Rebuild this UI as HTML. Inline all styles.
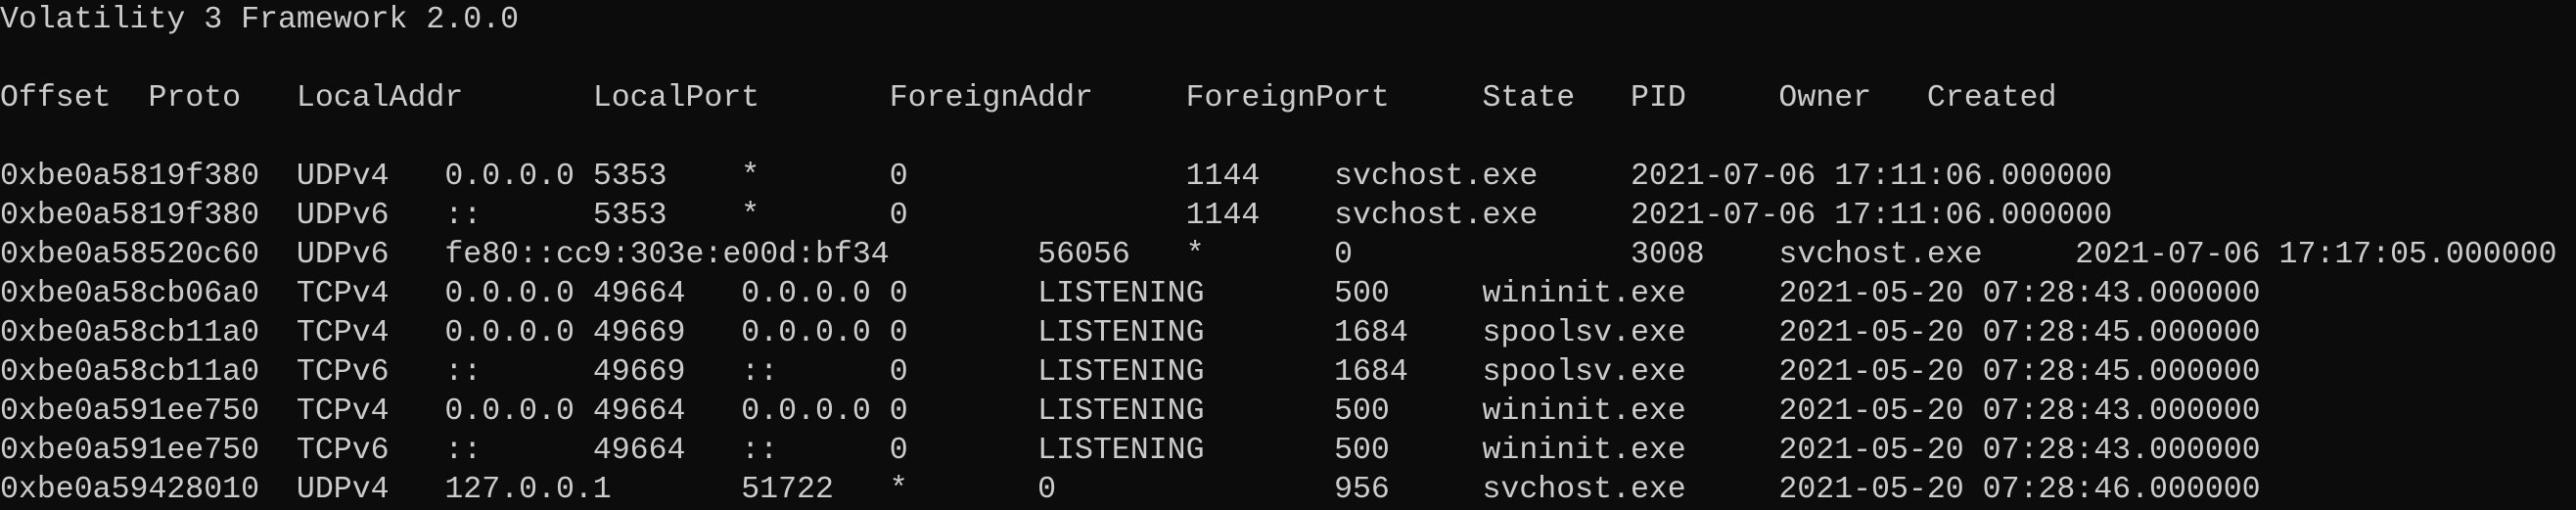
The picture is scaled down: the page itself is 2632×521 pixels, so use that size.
<!DOCTYPE html>
<html><head><meta charset="utf-8"><style>
html,body{margin:0;padding:0;background:#0c0c0c;width:2632px;height:521px;overflow:hidden}
pre{margin:0;position:absolute;left:0;top:1px;font-family:"Liberation Mono",monospace;font-size:31.55px;line-height:40px;color:#cccccc;tab-size:8;-moz-tab-size:8;white-space:pre}
</style></head><body><pre>Volatility 3 Framework 2.0.0

Offset	Proto	LocalAddr	LocalPort	ForeignAddr	ForeignPort	State	PID	Owner	Created

0xbe0a5819f380	UDPv4	0.0.0.0	5353	*	0		1144	svchost.exe	2021-07-06 17:11:06.000000
0xbe0a5819f380	UDPv6	::	5353	*	0		1144	svchost.exe	2021-07-06 17:11:06.000000
0xbe0a58520c60	UDPv6	fe80::cc9:303e:e00d:bf34	56056	*	0		3008	svchost.exe	2021-07-06 17:17:05.000000
0xbe0a58cb06a0	TCPv4	0.0.0.0	49664	0.0.0.0	0	LISTENING	500	wininit.exe	2021-05-20 07:28:43.000000
0xbe0a58cb11a0	TCPv4	0.0.0.0	49669	0.0.0.0	0	LISTENING	1684	spoolsv.exe	2021-05-20 07:28:45.000000
0xbe0a58cb11a0	TCPv6	::	49669	::	0	LISTENING	1684	spoolsv.exe	2021-05-20 07:28:45.000000
0xbe0a591ee750	TCPv4	0.0.0.0	49664	0.0.0.0	0	LISTENING	500	wininit.exe	2021-05-20 07:28:43.000000
0xbe0a591ee750	TCPv6	::	49664	::	0	LISTENING	500	wininit.exe	2021-05-20 07:28:43.000000
0xbe0a59428010	UDPv4	127.0.0.1	51722	*	0		956	svchost.exe	2021-05-20 07:28:46.000000</pre></body></html>
